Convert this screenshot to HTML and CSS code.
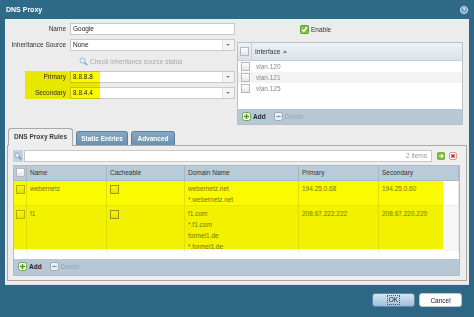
FILE: index.html
```html
<!DOCTYPE html>
<html lang="en">
<head>
<meta charset="UTF-8" />
<meta name="viewport" content="width=device-width, initial-scale=1.0" />
<title>DNS Proxy</title>
<link rel="stylesheet" href="styles.css">
</head>
<body>
<div class="dialog">
  <!-- Заголовок -->
  <div class="titlebar">
    <span class="title">DNS Proxy</span>
    <span class="help">?</span>
  </div>

  <div class="dlgBody">
    <div class="top">
      <!-- Форма слева -->
      <div class="form">
        <div class="row"><label>Name</label><div class="field"><span class="val">Google</span></div></div>
        <div class="row"><label>Inheritance Source</label><div class="field"><span class="val">None</span><span class="arrow"></span></div></div>
        <div class="checkRow">
          <svg width="9" height="9" viewBox="0 0 9 9"><circle cx="3.6" cy="3.6" r="2.6" fill="#e4eef7" stroke="#9ab8d2" stroke-width="1"/><path d="M5.6 5.6L8.3 8.3" stroke="#8aa9c4" stroke-width="1.6"/></svg>
          <span>Check inheritance source status</span>
        </div>
        <div class="row"><label>Primary</label><div class="field"><span class="val">8.8.8.8</span><span class="arrow"></span></div></div>
        <div class="row"><label>Secondary</label><div class="field"><span class="val">8.8.4.4</span><span class="arrow"></span></div></div>
        <div class="mark markForm"></div>
      </div>

      <!-- Интерфейсы справа -->
      <div class="side">
        <div class="enable">
          <svg width="9" height="9" viewBox="0 0 9 9"><rect x=".5" y=".5" width="8" height="8" rx="1" fill="#86c24a" stroke="#5f9a2e"/><path d="M2 4.6l1.8 1.9L7 2.2" fill="none" stroke="#fff" stroke-width="1.4"/></svg>
          <span>Enable</span>
        </div>
        <div class="ifTable">
          <div class="ifHead">
            <div class="cbCell"><span class="cb"></span></div>
            <span class="ifTitle">Interface</span><span class="sort"></span>
          </div>
          <div class="ifRow"><span class="cb"></span>vlan.120</div>
          <div class="ifRow alt"><span class="cb"></span>vlan.121</div>
          <div class="ifRow"><span class="cb"></span>vlan.125</div>
          <div class="fill"></div>
          <div class="bar">
            <span class="btn add">
              <svg width="9" height="9" viewBox="0 0 9 9"><rect x=".5" y=".5" width="8" height="8" rx="2" fill="#f1f8e8" stroke="#74aa4c"/><path d="M4.5 2v5M2 4.5h5" stroke="#4c9a28" stroke-width="1.4"/></svg>Add
            </span>
            <span class="btn del">
              <svg width="9" height="9" viewBox="0 0 9 9"><rect x=".5" y=".5" width="8" height="8" rx="2" fill="#eef2f5" stroke="#9aa9b5"/><path d="M2.3 4.5h4.4" stroke="#8d9ca8" stroke-width="1.4"/></svg>Delete
            </span>
          </div>
        </div>
      </div>
    </div>

    <!-- Вкладки -->
    <div class="tabs">
      <div class="tab active">DNS Proxy Rules</div>
      <div class="tab t2">Static Entries</div>
      <div class="tab t3">Advanced</div>
    </div>

    <div class="panel">
      <div class="search">
        <div class="sIcon">
          <svg width="8" height="8" viewBox="0 0 9 9"><circle cx="3.6" cy="3.6" r="2.6" fill="#e4eef7" stroke="#7ea3c4" stroke-width="1"/><path d="M5.6 5.6L8.3 8.3" stroke="#6f95b6" stroke-width="1.6"/></svg>
        </div>
        <div class="sInput">2 items</div>
        <span class="sBtn go">
          <svg width="8" height="8" viewBox="0 0 8 8"><rect width="8" height="8" rx="1.5" fill="#79b83f"/><path d="M1.8 4h4M4.2 2.2L6 4 4.2 5.8" fill="none" stroke="#fff" stroke-width="1.2"/></svg>
        </span>
        <span class="sBtn clr">
          <svg width="8" height="8" viewBox="0 0 8 8"><rect x=".5" y=".5" width="7" height="7" rx="1.5" fill="#f5f5f5" stroke="#c9a0a0"/><path d="M2.4 2.4l3.2 3.2M5.6 2.4L2.4 5.6" stroke="#d02020" stroke-width="1.4"/></svg>
        </span>
      </div>

      <div class="rules">
        <div class="rHead">
          <div class="c cbc"><span class="cb"></span></div>
          <div class="c">Name</div>
          <div class="c">Cacheable</div>
          <div class="c">Domain Name</div>
          <div class="c">Primary</div>
          <div class="c">Secondary</div>
          <div class="c"></div>
        </div>
        <div class="rRow r1">
          <div class="c cbc"><span class="cb"></span></div>
          <div class="c">webernetz</div>
          <div class="c"><span class="cb big"></span></div>
          <div class="c">webernetz.net<br>*.webernetz.net</div>
          <div class="c">194.25.0.68</div>
          <div class="c">194.25.0.60</div>
          <div class="c"></div>
        </div>
        <div class="rRow r2">
          <div class="c cbc"><span class="cb"></span></div>
          <div class="c">f1</div>
          <div class="c"><span class="cb big"></span></div>
          <div class="c">f1.com<br>*.f1.com<br>formel1.de<br>*.formel1.de</div>
          <div class="c">208.67.222.222</div>
          <div class="c">208.67.220.220</div>
          <div class="c"></div>
        </div>
        <div class="fill"></div>
        <div class="bar">
          <span class="btn add">
            <svg width="9" height="9" viewBox="0 0 9 9"><rect x=".5" y=".5" width="8" height="8" rx="2" fill="#f1f8e8" stroke="#74aa4c"/><path d="M4.5 2v5M2 4.5h5" stroke="#4c9a28" stroke-width="1.4"/></svg>Add
          </span>
          <span class="btn del">
            <svg width="9" height="9" viewBox="0 0 9 9"><rect x=".5" y=".5" width="8" height="8" rx="2" fill="#eef2f5" stroke="#9aa9b5"/><path d="M2.3 4.5h4.4" stroke="#8d9ca8" stroke-width="1.4"/></svg>Delete
          </span>
        </div>
        <div class="mark markRules"></div>
      </div>
    </div>
  </div>

  <!-- Кнопки -->
  <div class="actions">
    <button class="ok"><span>OK</span></button>
    <button class="cancel">Cancel</button>
  </div>
</div>
</body>
</html>
```

FILE: styles.css
```css
body {
  margin: 0;
  background-color: #2e6785;
  font-family: "Liberation Sans", Arial, sans-serif;
  font-size: 6.5px;
  color: #333;
}
.dialog {
  width: 474px;
  height: 317px;
  display: flex;
  flex-direction: column;
}

/* Заголовок */
.titlebar {
  height: 19px;
  box-sizing: border-box;
  padding: 0 6px;
  display: flex;
  align-items: center;
  justify-content: space-between;
  background-color: #306a89;
}
.title { color: #fff; font-weight: bold; font-size: 7px; }
.help {
  width: 8px; height: 8px;
  box-sizing: border-box;
  border-radius: 50%;
  border: 1px solid #e8f0f6;
  background: #5b93bd;
  color: #fff;
  font-size: 5px;
  font-weight: bold;
  line-height: 6px;
  text-align: center;
}

.dlgBody {
  margin: 0 5px;
  height: 266px;
  box-sizing: border-box;
  padding: 4px 0 3px 0;
  background-color: #ececec;
  display: flex;
  flex-direction: column;
  border-bottom: 1px solid #dcdcdc;
}
.top { display: flex; height: 105px; }

/* Форма */
.form { width: 230px; position: relative; }
.row { display: flex; height: 12px; margin-bottom: 4px; }
.row label {
  flex: 0 0 65px;
  box-sizing: border-box;
  padding-right: 4px;
  text-align: right;
  line-height: 12px;
  color: #333;
}
.field {
  flex: 0 0 165px;
  box-sizing: border-box;
  display: flex;
  border: 1px solid #cacaca;
  background: #fff;
}
.val { flex: 1; padding-left: 2px; line-height: 10px; color: #222; }
.arrow {
  width: 11px;
  border-left: 1px solid #e2e2e2;
  background: #f3f3f3;
  position: relative;
}
.arrow::after {
  content: "";
  position: absolute;
  left: 3px; top: 4px;
  border-left: 2.5px solid transparent;
  border-right: 2.5px solid transparent;
  border-top: 2.5px solid #8a8a8a;
}
.checkRow {
  height: 12px;
  margin-bottom: 4px;
  padding-left: 74px;
  display: flex;
  align-items: center;
  gap: 2px;
  color: #a4a8ab;
}

/* Выделение маркером */
.mark {
  position: absolute;
  background: #fafa00;
  mix-blend-mode: multiply;
}
.markForm { left: 20px; top: 48px; width: 75px; height: 28px; }
.markRules { left: 0; top: 15px; width: 429px; height: 68px; }

/* Интерфейсы */
.side { margin-left: 2px; }
.enable {
  height: 12px;
  margin-bottom: 7px;
  padding-left: 63px;
  display: flex;
  align-items: center;
  gap: 2px;
}
.ifTable {
  width: 226px;
  height: 83px;
  box-sizing: border-box;
  border: 1px solid #b9c1c8;
  background: #fff;
  display: flex;
  flex-direction: column;
}
.ifHead {
  height: 17px;
  flex: none;
  display: flex;
  align-items: center;
  background: linear-gradient(#edf2f6, #d9e3eb);
  border-bottom: 1px solid #c5d0d9;
}
.cbCell {
  width: 13px; height: 100%;
  display: flex; align-items: center; justify-content: center;
  border-right: 1px solid #c5d0d9;
}
.ifTitle { padding-left: 3px; color: #333; }
.sort {
  margin-left: 3px;
  border-left: 2.5px solid transparent;
  border-right: 2.5px solid transparent;
  border-bottom: 3px solid #7a8a96;
}
.ifRow {
  height: 11px;
  flex: none;
  display: flex;
  align-items: center;
  padding-left: 3px;
  color: #8a8a8a;
}
.ifRow .cb { margin-right: 6px; }
.ifRow.alt { background: #f3f3f3; }
.cb {
  width: 7px; height: 7px;
  border: 1px solid #b8b8b8;
  background: linear-gradient(#fff, #e6e6e6);
  display: inline-block;
}
.cb.big { width: 7px; height: 7px; border-color: #9c9c9c; }
.fill { flex: 1; }
.bar {
  height: 15px;
  flex: none;
  background: #b6c7d5;
  display: flex;
  align-items: center;
  padding-left: 4px;
  gap: 8px;
}
.btn { display: flex; align-items: center; gap: 2px; }
.btn.add { color: #1f2a33; font-weight: bold; }
.btn.del { color: #97a8b5; }

/* Вкладки */
.tabs {
  display: flex;
  align-items: flex-end;
  height: 17px;
  padding-left: 3px;
  gap: 3px;
  position: relative;
  z-index: 1;
}
.tab {
  height: 14px;
  box-sizing: border-box;
  border: 1px solid #5b819f;
  border-bottom: none;
  border-radius: 3px 3px 0 0;
  background: linear-gradient(#86a8c2, #6b91ae);
  color: #fff;
  font-weight: bold;
  text-align: center;
  line-height: 13px;
}
.tab.active {
  width: 65px;
  height: 18px;
  margin-bottom: -1px;
  background: #eeeeee;
  border-color: #a9a9a9;
  color: #3a3a3a;
  line-height: 16px;
}
.tab.t2 { width: 52px; }
.tab.t3 { width: 44px; }

.panel {
  margin: 0 2px;
  height: 137px;
  box-sizing: border-box;
  border: 1px solid #a9a9a9;
  background: #eeeeee;
  padding: 4px 6px 0 5px;
}
.search { display: flex; height: 12px; margin-bottom: 3px; align-items: center; }
.sIcon {
  width: 10px; height: 12px;
  background: #c4d2dd;
  display: flex; align-items: center; justify-content: center;
}
.sInput {
  width: 408px; height: 12px;
  box-sizing: border-box;
  margin-left: 1px;
  border: 1px solid #c8c8c8;
  background: #fff;
  color: #9a9a9a;
  text-align: right;
  padding-right: 4px;
  line-height: 10px;
}
.sBtn { display: flex; }
.sBtn.go { margin-left: 5px; }
.sBtn.clr { margin-left: 4px; }

/* Таблица правил */
.rules {
  position: relative;
  height: 111px;
  box-sizing: border-box;
  border: 1px solid #b3bcc4;
  background: #fff;
  display: flex;
  flex-direction: column;
}
.rHead, .rRow {
  display: grid;
  grid-template-columns: 12px 80px 78px 114px 80px 80px 1fr;
  flex: none;
}
.rHead {
  height: 14px;
  background: #b9cbd9;
  border-bottom: 1px solid #a8bac9;
}
.rHead .c {
  border-left: 1px solid #a3b6c6;
  line-height: 14px;
  padding-left: 3px;
  color: #333;
}
.rRow .c {
  border-left: 1px solid #e4e4e4;
  padding: 2px 0 0 3px;
  line-height: 11px;
  color: #7c7c7c;
}
.rHead .cbc, .rRow .cbc { border-left: none; padding-left: 2px; }
.rHead .cbc { display: flex; align-items: center; }
.rRow .cbc { padding-top: 4px; }
.rRow .cb { vertical-align: top; margin-top: 2px; }
.rRow .cbc .cb { margin-top: 0; }
.r1 { height: 24px; border-bottom: 1px solid #ececec; }
.r2 { height: 45px; background: #f6f6f6; }
.rules .bar { height: 16px; }

/* Кнопки OK / Cancel */
.actions {
  flex: 1;
  display: flex;
  justify-content: flex-end;
  align-items: flex-start;
  padding: 8px 12px 0 0;
  gap: 4px;
}
.actions button {
  width: 43px;
  height: 14px;
  border-radius: 3px;
  font-family: "Liberation Sans", Arial, sans-serif;
  font-size: 6.5px;
  color: #222;
  padding: 0;
  cursor: pointer;
}
.ok {
  border: 1px solid #5e88aa;
  background: linear-gradient(#d6e5f1, #9fbfda);
}
.ok span {
  display: inline-block;
  line-height: 8px;
  padding: 0 1px;
  border: 1px dotted #555;
}
.cancel {
  border: 1px solid #c4c4c4;
  background: #fdfdfd;
}
```
